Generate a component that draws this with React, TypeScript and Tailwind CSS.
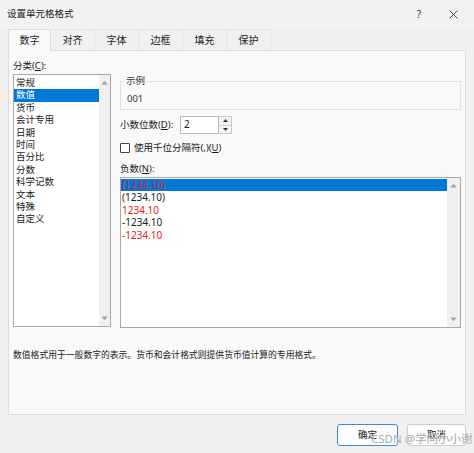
import React from "react";

const font = "font-['Noto_Sans','Noto_Sans_CJK_SC',sans-serif]";

function UpTri() {
  return (
    <svg width="7" height="5" viewBox="0 0 7 5">
      <path d="M0.5 4.5 L3.5 0.8 L6.5 4.5 Z" fill="#a0a0a0" />
    </svg>
  );
}
function DownTri() {
  return (
    <svg width="7" height="5" viewBox="0 0 7 5">
      <path d="M0.5 0.5 L3.5 4.2 L6.5 0.5 Z" fill="#a0a0a0" />
    </svg>
  );
}

function ScrollBar({ width }: { width: string }) {
  return (
    <div className={`${width} h-full bg-[#f0f0f0] flex flex-col justify-between items-center py-[5px] shrink-0`}>
      <UpTri />
      <DownTri />
    </div>
  );
}

const categories = ["常规", "数值", "货币", "会计专用", "日期", "时间", "百分比", "分数", "科学记数", "文本", "特殊", "自定义"];

export default function App() {
  const tabs = ["数字", "对齐", "字体", "边框", "填充", "保护"];
  return (
    <div className={`${font} relative w-[474px] h-[453px] bg-[#f0f0f0] text-[#1a1a1a] overflow-hidden`}>
      {/* title bar */}
      <div className="h-[28px] flex items-center pl-[7px] pr-[16px] bg-[#f2f2f2]">
        <span className="text-[9.5px] leading-none">设置单元格格式</span>
        <div className="ml-auto flex items-center gap-[28px]">
          <span className="text-[10px] leading-none text-[#333]">?</span>
          <svg width="9" height="9" viewBox="0 0 9 9">
            <path d="M0.5 0.5 L8.5 8.5 M8.5 0.5 L0.5 8.5" stroke="#333" strokeWidth="0.9" />
          </svg>
        </div>
      </div>
      {/* tabs */}
      <div className="h-[22px] flex items-end pl-[8px]">
        {tabs.map((t, i) =>
          i === 0 ? (
            <div
              key={t}
              className="relative z-10 -mb-px w-[43px] h-[22px] bg-[#f9f9f9] border border-b-0 border-[#dcdcdc] flex items-center justify-center text-[10px]"
            >
              {t}
            </div>
          ) : (
            <div
              key={t}
              className="w-[44px] h-[21px] bg-[#f0f0f0] border-t border-r border-[#e3e3e3] flex items-center justify-center text-[10px] text-[#222]"
            >
              {t}
            </div>
          )
        )}
      </div>
      {/* panel */}
      <div className="ml-[8px] w-[458px] h-[365px] border border-[#dcdcdc] bg-[#f9f9f9] flex flex-col pl-[4px]">
        <div className="flex gap-[9px]">
          {/* left column */}
          <div className="w-[98px] flex flex-col">
            <div className="pt-[9px] h-[23px] text-[9.5px] leading-[12px]">
              分类(<span className="underline">C</span>):
            </div>
            <div className="h-[253px] border border-[#a8a8a8] bg-white flex">
              <div className="flex-1 pt-[2px]">
                {categories.map((c, i) => (
                  <div
                    key={c}
                    className={`h-[12.4px] leading-[12.4px] text-[9.5px] pl-[2px] ${i === 1 ? "bg-[#0078d7] text-white" : ""}`}
                  >
                    {c}
                  </div>
                ))}
              </div>
              <ScrollBar width="w-[11px]" />
            </div>
          </div>
          {/* right column */}
          <div className="w-[341px] flex flex-col">
            <fieldset className="mt-[24px] h-[35px] border border-[#e0e0e0] px-[6px]">
              <legend className="ml-[-2px] px-[1px] text-[9.5px] leading-[12px] text-[#333]">示例</legend>
              <div className="text-[9.5px] leading-[12px] pt-[6px] text-[#333]">001</div>
            </fieldset>
            <div className="mt-[6px] flex items-center h-[18px]">
              <span className="text-[9.5px] w-[60px]">
                小数位数(<span className="underline">D</span>):
              </span>
              <div className="w-[39px] h-[18px] border border-[#b8b8b8] bg-white text-[10px] leading-[15px] pl-[3px]">2</div>
              <div className="w-[13px] h-[18px] flex flex-col border border-l-0 border-[#c8c8c8] bg-[#f3f3f3]">
                <div className="flex-1 flex items-center justify-center border-b border-[#d6d6d6]">
                  <svg width="5" height="3" viewBox="0 0 5 3"><path d="M0 3 L2.5 0 L5 3 Z" fill="#333" /></svg>
                </div>
                <div className="flex-1 flex items-center justify-center">
                  <svg width="5" height="3" viewBox="0 0 5 3"><path d="M0 0 L2.5 3 L5 0 Z" fill="#333" /></svg>
                </div>
              </div>
            </div>
            <div className="mt-[8px] flex items-center h-[12px]">
              <div className="w-[10px] h-[10px] border border-[#444] rounded-[1px] bg-white" />
              <span className="ml-[4px] text-[9.5px] leading-[12px]">
                使用千位分隔符(,)(<span className="underline">U</span>)
              </span>
            </div>
            <div className="mt-[9px] h-[12px] text-[9.5px] leading-[12px]">
              负数(<span className="underline">N</span>):
            </div>
            <div className="mt-[2px] h-[151px] border border-[#a8a8a8] bg-white flex">
              <div className="flex-1 pt-[1px]">
                <div className="h-[12px] leading-[12px] bg-[#0078d7] text-[10px] text-[#e8182b] pl-[1px]">
                  (1234.10)
                </div>
                <div className="h-[12.5px] leading-[12.5px] text-[10px] pl-[1px]">(1234.10)</div>
                <div className="h-[12.5px] leading-[12.5px] text-[10px] pl-[1px] text-[#e81c1c]">1234.10</div>
                <div className="h-[12.5px] leading-[12.5px] text-[10px] pl-[1px]">-1234.10</div>
                <div className="h-[12.5px] leading-[12.5px] text-[10px] pl-[1px] text-[#e81c1c]">-1234.10</div>
              </div>
              <ScrollBar width="w-[13px]" />
            </div>
          </div>
        </div>
        <div className="mt-[21px] text-[8.8px] leading-[12px] text-[#222]">
          数值格式用于一般数字的表示。货币和会计格式则提供货币值计算的专用格式。
        </div>
      </div>
      {/* footer */}
      <div className="flex justify-end gap-[9px] pr-[8px] pt-[9px]">
        <button className="w-[61px] h-[22px] rounded-[3px] border-[1.5px] border-[#3c8bd9] bg-[#fdfdfd] text-[9.5px] leading-none">
          确定
        </button>
        <button className="w-[59px] h-[22px] rounded-[3px] border border-[#cfcfcf] bg-[#fdfdfd] text-[9.5px] leading-none">
          取消
        </button>
      </div>
      {/* watermark */}
      <div className="absolute left-[371px] top-[431px] text-[11.5px] leading-[15px] text-[#a9a9a9] [text-shadow:0_0_1px_#fff] pointer-events-none whitespace-nowrap">
        CSDN @学问小小谢
      </div>
    </div>
  );
}
